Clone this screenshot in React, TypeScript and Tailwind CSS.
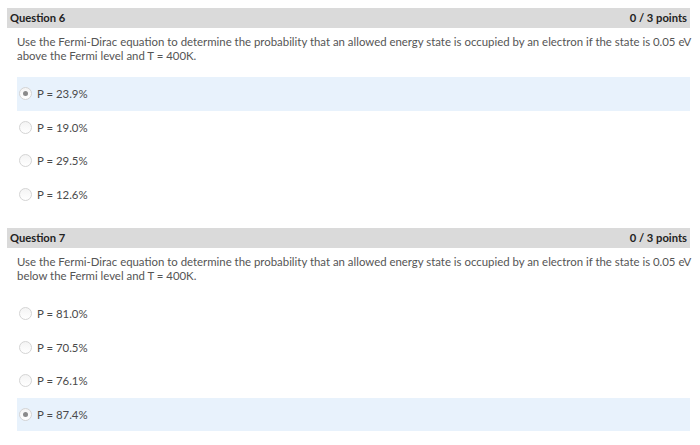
import React from "react";

type Question = {
  id: number;
  text: string;
  options: string[];
  selected: number;
};

const questions: Question[] = [
  {
    id: 6,
    text: "Use the Fermi-Dirac equation to determine the probability that an allowed energy state is occupied by an electron if the state is 0.05 eV above the Fermi level and T = 400K.",
    options: ["P = 23.9%", "P = 19.0%", "P = 29.5%", "P = 12.6%"],
    selected: 0,
  },
  {
    id: 7,
    text: "Use the Fermi-Dirac equation to determine the probability that an allowed energy state is occupied by an electron if the state is 0.05 eV below the Fermi level and T = 400K.",
    options: ["P = 81.0%", "P = 70.5%", "P = 76.1%", "P = 87.4%"],
    selected: 3,
  },
];

const Radio = ({ checked }: { checked: boolean }) => (
  <span className="w-[13px] h-[13px] rounded-full border border-[#d4d4d4] bg-gradient-to-b from-[#f4f4f4] to-white flex items-center justify-center shrink-0">
    {checked && <span className="w-[5px] h-[5px] rounded-full bg-[#8a8a8a]" />}
  </span>
);

const QuestionBlock = ({ q }: { q: Question }) => (
  <div>
    <div className="h-[20px] bg-[#dadada] flex items-center justify-between px-[3px] text-[11.2px] font-bold text-[#222]">
      <span>Question {q.id}</span>
      <span>0 / 3 points</span>
    </div>
    <p className="pl-[10px] -mr-[5px] pt-[7px] text-[11.4px] leading-[14px] text-[#555]">{q.text}</p>
    <div className="mt-[14px] ml-[10px]">
      {q.options.map((opt, i) => (
        <div
          key={opt}
          className={`h-[33.5px] flex items-center gap-[5px] pl-[2px] text-[11.4px] text-[#4a4a4a] ${
            i === q.selected ? "bg-[#e8f2fc]" : ""
          }`}
        >
          <Radio checked={i === q.selected} />
          <span>{opt}</span>
        </div>
      ))}
    </div>
  </div>
);

export default function App() {
  return (
    <div className="w-[700px] h-[445px] bg-white pt-[8px] pl-[7px] pr-[10px] font-['Lato','Open_Sans',sans-serif] overflow-hidden">
      <div className="flex flex-col gap-[17px]">
        {questions.map((q) => (
          <QuestionBlock key={q.id} q={q} />
        ))}
      </div>
    </div>
  );
}
